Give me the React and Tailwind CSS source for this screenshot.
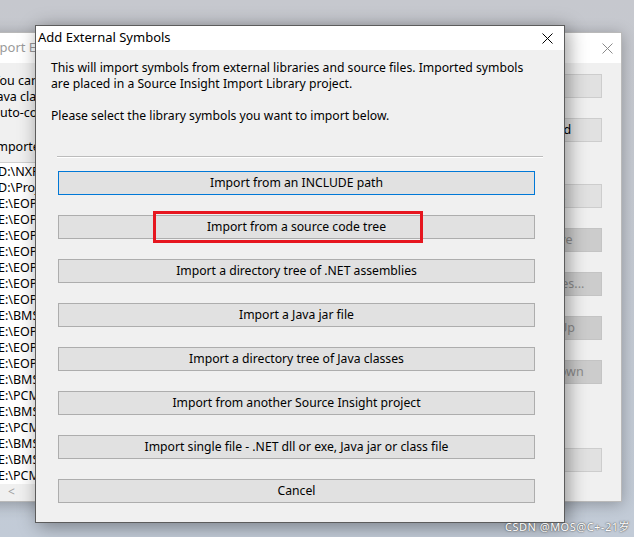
import React from "react";

const font = { fontFamily: '"Noto Sans", "Noto Sans CJK SC", sans-serif' };

const listRows = [
  "D:\\NXP\\S32DS\\include",
  "D:\\Projects\\common",
  "E:\\EOP\\Source\\App",
  "E:\\EOP\\Source\\Bsw",
  "E:\\EOP\\Source\\Cdd",
  "E:\\EOP\\Source\\Mcal",
  "E:\\EOP\\Source\\Os",
  "E:\\EOP\\Source\\Rte",
  "E:\\EOP\\Source\\Cfg",
  "E:\\BMS\\Source\\App",
  "E:\\EOP\\Source\\Lib",
  "E:\\EOP\\Source\\Com",
  "E:\\EOP\\Source\\Diag",
  "E:\\BMS\\Source\\Bsw",
  "E:\\PCM\\Source\\App",
  "E:\\BMS\\Source\\Mcal",
  "E:\\PCM\\Source\\Bsw",
  "E:\\BMS\\Source\\Cdd",
  "E:\\BMS\\Source\\Cfg",
  "E:\\PCM\\Source\\Mcal",
];

const sideButtons = [
  { label: "OK", gap: "mt-[11px]" },
  { label: "Rebuild", gap: "mt-[20px]" },
  { label: "Add...", gap: "mt-[42px]" },
  { label: "Remove", gap: "mt-[20px]", off: true },
  { label: "Properties...", gap: "mt-[20px]", off: true },
  { label: "Move Up", gap: "mt-[20px]", off: true },
  { label: "Move Down", gap: "mt-[20px]", off: true },
  { label: "Help", gap: "mt-[64px]" },
];

const importButtons = [
  "Import from an INCLUDE path",
  "Import from a source code tree",
  "Import a directory tree of .NET assemblies",
  "Import a Java jar file",
  "Import a directory tree of Java classes",
  "Import from another Source Insight project",
  "Import single file - .NET dll or exe, Java jar or class file",
  "Cancel",
];

function CloseX({ color = "#000" }) {
  return (
    <svg width="11" height="11" viewBox="0 0 11 11">
      <path d="M0.5 0.5 L10.5 10.5 M10.5 0.5 L0.5 10.5" stroke={color} strokeWidth="1" />
    </svg>
  );
}

function BackWindow() {
  return (
    <div className="absolute left-[-20px] top-[32px] w-[642px] h-[470px] bg-[#f0f0f0] border border-[#b9b9b9] shadow-[0_2px_14px_rgba(0,0,0,0.28)] flex flex-col">
      <div className="h-[30px] bg-white flex items-center justify-between pl-[2px] pr-[8px] shrink-0">
        <span className="text-[13px] text-[#9a9a9a]">Import External Symbols</span>
        <CloseX color="#8a8a8a" />
      </div>
      <div className="flex flex-1">
        <div className="w-[500px] flex flex-col">
          <div className="pt-[10px] pl-[12px] text-[12.5px] leading-[16px] text-[#000]">
            <div>You can import symbols from external libraries, and from</div>
            <div>Java classes and .NET assemblies for use with syntax</div>
            <div>auto-completion and symbol lookups.</div>
          </div>
          <div className="mt-[18px] pl-[11px] text-[12.5px] leading-[16px] text-[#000]">
            Imported libraries:
          </div>
          <div className="mt-[7px] ml-[10px] bg-white border-t border-[#d0d0d0] flex flex-col">
            <div className="pt-[1px]">
              {listRows.map((r, i) => (
                <div key={i} className="h-[16px] leading-[16px] pl-[7px] text-[12.5px] text-[#000] whitespace-nowrap">
                  {r}
                </div>
              ))}
            </div>
            <div className="h-[15px] bg-[#f0f0f0] flex items-center pl-[17px]">
              <span className="text-[12px] text-[#a0a0a0] leading-none">&lt;</span>
            </div>
          </div>
        </div>
        <div className="flex-1 flex flex-col items-end pr-[19px]">
          {sideButtons.map((b) => (
            <div
              key={b.label}
              className={`${b.gap} w-[106px] h-[24px] flex items-center justify-center text-[12.5px] border ${
                b.off ? "bg-[#cccccc] border-[#c4c4c4] text-[#8a8a8a]" : "bg-[#e1e1e1] border-[#cdcdcd] text-[#000]"
              }`}
            >
              {b.label}
            </div>
          ))}
        </div>
      </div>
    </div>
  );
}

function Dialog() {
  return (
    <div className="absolute left-[35px] top-[25px] w-[530px] h-[498px] bg-[#f0f0f0] border border-[#5c5c5c] shadow-[3px_3px_18px_rgba(0,0,0,0.4)] flex flex-col">
      <div className="h-[24px] bg-white flex items-center justify-between pl-[2px] pr-[11px] shrink-0">
        <span className="text-[13px] text-[#000]">Add External Symbols</span>
        <CloseX />
      </div>
      <div className="px-[15px] pt-[10px] text-[12.2px] leading-[16px] text-[#000]">
        <div>This will import symbols from external libraries and source files. Imported symbols</div>
        <div>are placed in a Source Insight Import Library project.</div>
        <div className="mt-[16px]">Please select the library symbols you want to import below.</div>
        <div className="mt-[32px] mx-[6px] border-t border-b border-t-[#bcbcbc] border-b-white" />
        <div className="mt-[13px] ml-[7px] mr-[14px] flex flex-col gap-[20px]">
          {importButtons.map((label, i) => (
            <div key={label} className="relative">
              <div
                className={`h-[24px] flex items-center justify-center bg-[#e1e1e1] border text-[12.2px] text-[#000] ${
                  i === 0 ? "border-[#0078d7]" : "border-[#adadad]"
                }`}
              >
                {label}
              </div>
              {i === 1 && (
                <div className="absolute left-[95px] top-[-4px] w-[270px] h-[32px] border-[3px] border-[#e6161f]" />
              )}
            </div>
          ))}
        </div>
      </div>
    </div>
  );
}

export default function App() {
  return (
    <div
      className="relative w-[634px] h-[537px] overflow-hidden bg-gradient-to-b from-[#c6c8ce] to-[#c2cbd7]"
      style={font}
    >
      <BackWindow />
      <Dialog />
      <div className="absolute right-[4px] bottom-[5px] text-[11px] leading-none text-white tracking-[0.5px] [text-shadow:0_0_2px_#555,0_0_1px_#555]">
        CSDN @MOS@C+-21岁
      </div>
    </div>
  );
}
